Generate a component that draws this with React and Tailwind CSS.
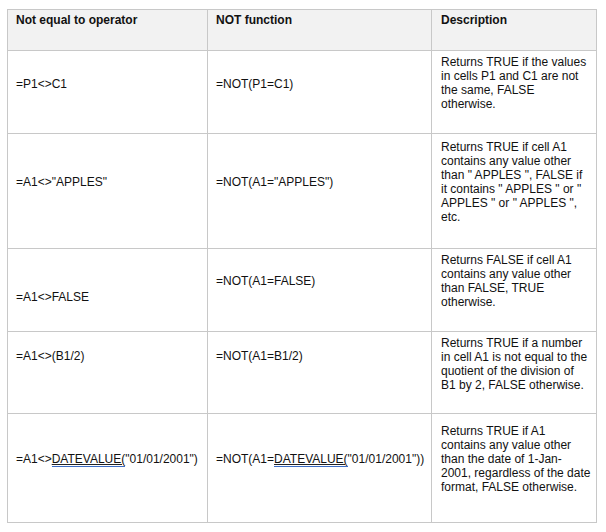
const ROWS = [
  {
    h: 'h-[83px]',
    pa: 'pt-[26px]',
    pb: 'pt-[26px]',
    pc: 'pt-[4px]',
    a: '=P1<>C1',
    b: '=NOT(P1=C1)',
    c: ['Returns TRUE if the values', 'in cells P1 and C1 are not', 'the same, FALSE', 'otherwise.'],
  },
  {
    h: 'h-[115px]',
    pa: 'pt-[41px]',
    pb: 'pt-[41px]',
    pc: 'pt-[6px]',
    a: '=A1<>"APPLES"',
    b: '=NOT(A1="APPLES")',
    c: [
      'Returns TRUE if cell A1',
      'contains any value other',
      'than " APPLES ", FALSE if',
      'it contains " APPLES " or "',
      'APPLES " or " APPLES ",',
      'etc.',
    ],
  },
  {
    h: 'h-[83px]',
    pa: 'pt-[41px]',
    pb: 'pt-[25px]',
    pc: 'pt-[4px]',
    a: '=A1<>FALSE',
    b: '=NOT(A1=FALSE)',
    c: ['Returns FALSE if cell A1', 'contains any value other', 'than FALSE, TRUE', 'otherwise.'],
  },
  {
    h: 'h-[82px]',
    pa: 'pt-[17px]',
    pb: 'pt-[17px]',
    pc: 'pt-[4px]',
    a: '=A1<>(B1/2)',
    b: '=NOT(A1=B1/2)',
    c: [
      'Returns TRUE if a number',
      'in cell A1 is not equal to the',
      'quotient of the division of',
      'B1 by 2, FALSE otherwise.',
    ],
  },
];

const DESC_LAST = [
  'Returns TRUE if A1',
  'contains any value other',
  'than the date of 1-Jan-',
  '2001, regardless of the date',
  'format, FALSE otherwise.',
];

function Dv() {
  return <span className="underline decoration-[#222] border-b border-[#3b6cc4] leading-[13px]">DATEVALUE(</span>;
}

function Lines({ lines }) {
  return lines.map((l, i) => (
    <div key={i} className="whitespace-nowrap">
      {l}
    </div>
  ));
}

export default function App() {
  return (
    <div
      className="w-[606px] h-[532px] bg-white pl-[7px] pt-[9px] text-[12px] leading-[14px] text-[#111]"
      style={{ fontFamily: '"Liberation Sans", Arial, sans-serif' }}
    >
      <div className="w-[590px] border-l border-t border-[#c8c8c8]">
        {/* Cabecera */}
        <div className="grid grid-cols-[200px_224px_165px] h-[41px] bg-[#f2f2f2] font-bold">
          <div className="border-r border-b border-[#c8c8c8] pl-[8px] pt-[3px]">Not equal to operator</div>
          <div className="border-r border-b border-[#c8c8c8] pl-[8px] pt-[3px]">NOT function</div>
          <div className="border-r border-b border-[#c8c8c8] pl-[9px] pt-[3px]">Description</div>
        </div>

        {ROWS.map((r, i) => (
          <div key={i} className={`grid grid-cols-[200px_224px_165px] ${r.h}`}>
            <div className={`border-r border-b border-[#c8c8c8] pl-[8px] ${r.pa} whitespace-nowrap`}>{r.a}</div>
            <div className={`border-r border-b border-[#c8c8c8] pl-[8px] ${r.pb} whitespace-nowrap`}>{r.b}</div>
            <div className={`border-r border-b border-[#c8c8c8] pl-[9px] ${r.pc}`}>
              <Lines lines={r.c} />
            </div>
          </div>
        ))}

        <div className="grid grid-cols-[200px_224px_165px] h-[109px]">
          <div className="border-r border-b border-[#c8c8c8] pl-[8px] pt-[38px] whitespace-nowrap">
            =A1&lt;&gt;<Dv />"01/01/2001")
          </div>
          <div className="border-r border-b border-[#c8c8c8] pl-[8px] pt-[38px] whitespace-nowrap">
            =NOT(A1=<Dv />"01/01/2001"))
          </div>
          <div className="border-r border-b border-[#c8c8c8] pl-[9px] pt-[10px]">
            <Lines lines={DESC_LAST} />
          </div>
        </div>
      </div>
    </div>
  );
}
